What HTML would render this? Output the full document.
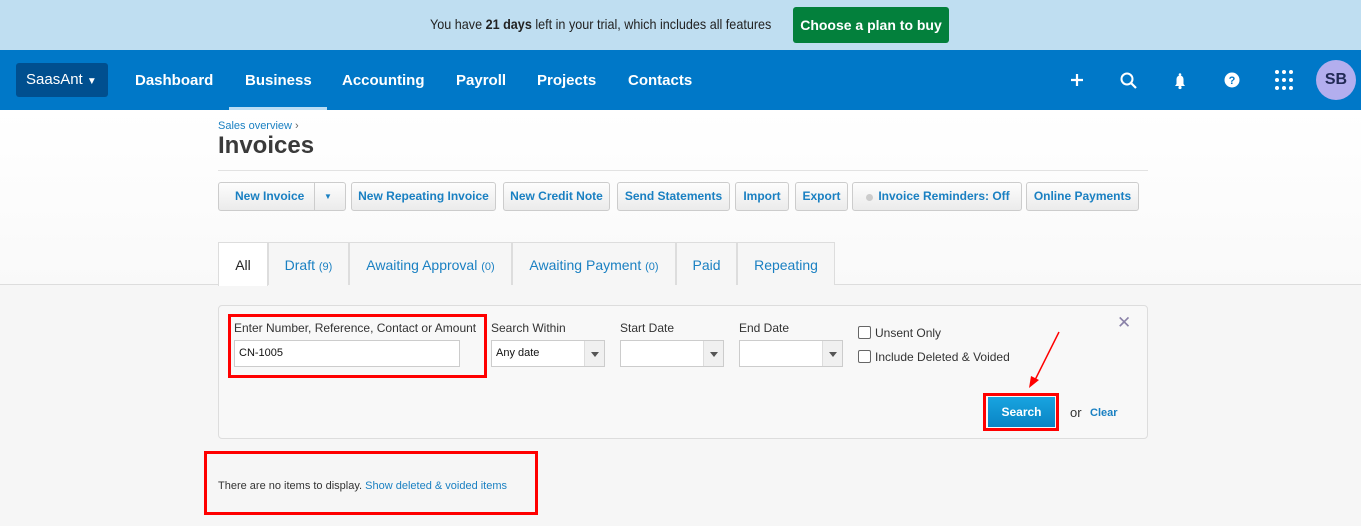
<!DOCTYPE html>
<html><head><meta charset="utf-8"><style>
*{box-sizing:border-box;margin:0;padding:0}
body{width:1361px;height:526px;overflow:hidden;font-family:"Liberation Sans",Arial,sans-serif;background:#f6f6f6;position:relative}
.abs{position:absolute}
.banner{left:0;top:0;width:1361px;height:50px;background:#bfdef1}
.nav{left:0;top:50px;width:1361px;height:60px;background:#0078c8}
.navi{top:72px;color:#fff;font-weight:bold;font-size:15px}
.top{left:0;top:110px;width:1361px;height:175px;background:linear-gradient(#fff,#f9f9f9)}
.btn{top:182px;height:29px;border:1px solid #ccc;border-radius:3px;background:linear-gradient(#fdfdfd,#ebebeb);color:#1a80c2;font-weight:bold;font-size:12px;line-height:27px;text-align:center;white-space:nowrap}
.tab{top:242px;height:43px;border:1px solid #ddd;border-bottom:none;background:#f6f6f6;color:#1a80c2;font-size:14px;line-height:45px;text-align:center;margin-left:-1px}
.tab small{font-size:11px}
.lbl{font-size:12px;color:#333;top:321px}
.inp{top:340px;height:27px;border:1px solid #ccc;background:#fff;font-size:11px;padding-left:4px;line-height:25px;color:#111}
.dd{position:absolute;right:0;top:0;width:20px;height:25px;border-left:1px solid #ddd;background:#f0f0f0}
.dd:after{content:"";position:absolute;left:6px;top:11px;border:4px solid transparent;border-top:5px solid #555}
.red{border:3px solid #f00}
.cb{width:13px;height:13px;border:1px solid #666;border-radius:2px;background:#fff}
</style></head><body>
<div class="abs banner"></div>
<div class="abs" style="left:430px;top:16px;font-size:14px;color:#222;white-space:nowrap;transform:scaleX(0.9);transform-origin:0 0">You have <b>21 days</b> left in your trial, which includes all features</div>
<div class="abs" style="left:793px;top:7px;width:156px;height:36px;background:#03803c;border-radius:3px;color:#fff;font-weight:bold;font-size:14px;line-height:36px;text-align:center">Choose a plan to buy</div>
<div class="abs nav"></div>
<div class="abs" style="left:16px;top:63px;width:92px;height:34px;background:#004f8f;border-radius:3px;color:#fff;font-size:15px;line-height:34px;padding-left:10px">SaasAnt <span style="font-size:10px">▼</span></div>
<div class="abs navi" style="left:135px">Dashboard</div>
<div class="abs navi" style="left:245px">Business</div>
<div class="abs navi" style="left:342px">Accounting</div>
<div class="abs navi" style="left:456px">Payroll</div>
<div class="abs navi" style="left:537px">Projects</div>
<div class="abs navi" style="left:628px">Contacts</div>
<div class="abs" style="left:229px;top:107px;width:98px;height:3px;background:#b9dcf4"></div>
<svg class="abs" style="left:1060px;top:64px" width="290" height="32">
<path d="M11 16h12M17 10v12" stroke="#fff" stroke-width="2.2"/>
<circle cx="67" cy="15" r="5.5" fill="none" stroke="#fff" stroke-width="2"/><path d="M71 19l5 5" stroke="#fff" stroke-width="2.2"/>
<path d="M115 22h10l-1.5-2v-5a3.5 3.5 0 0 0-7 0v5z" fill="#fff"/><circle cx="120" cy="10.5" r="1.3" fill="#fff"/><circle cx="120" cy="23.5" r="1.6" fill="#fff"/>
<circle cx="172" cy="16" r="7.5" fill="#fff"/><text x="172" y="20" font-size="11" font-weight="bold" fill="#0078c8" text-anchor="middle" font-family="Liberation Sans">?</text>
<g fill="#fff"><circle cx="217" cy="8" r="2"/><circle cx="224" cy="8" r="2"/><circle cx="231" cy="8" r="2"/><circle cx="217" cy="16" r="2"/><circle cx="224" cy="16" r="2"/><circle cx="231" cy="16" r="2"/><circle cx="217" cy="24" r="2"/><circle cx="224" cy="24" r="2"/><circle cx="231" cy="24" r="2"/></g>
</svg>
<div class="abs" style="left:1316px;top:60px;width:40px;height:40px;border-radius:50%;background:#b3aeee;color:#222a55;font-weight:bold;font-size:16px;line-height:40px;text-align:center">SB</div>
<div class="abs top"></div>
<div class="abs" style="left:218px;top:120px;font-size:11px;color:#1a80c2">Sales overview <span style="color:#666">›</span></div>
<div class="abs" style="left:218px;top:132px;font-size:24px;font-weight:bold;color:#3a3a3a">Invoices</div>
<div class="abs" style="left:218px;top:170px;width:930px;height:1px;background:#e2e2e2"></div>
<div class="abs btn" style="left:218px;width:128px;text-align:left;padding-left:16px">New Invoice<span style="position:absolute;left:95px;top:0;width:1px;height:27px;background:#ccc"></span><span style="position:absolute;left:105px;top:0;font-size:8px">▼</span></div>
<div class="abs btn" style="left:351px;width:145px">New Repeating Invoice</div>
<div class="abs btn" style="left:503px;width:107px">New Credit Note</div>
<div class="abs btn" style="left:617px;width:113px">Send Statements</div>
<div class="abs btn" style="left:735px;width:54px">Import</div>
<div class="abs btn" style="left:795px;width:53px">Export</div>
<div class="abs btn" style="left:852px;width:170px;padding-left:14px"><span style="position:absolute;left:13px;top:11px;width:7px;height:7px;border-radius:50%;background:#ccc"></span>Invoice Reminders: Off</div>
<div class="abs btn" style="left:1026px;width:113px">Online Payments</div>
<div class="abs" style="left:0;top:284px;width:1361px;height:1px;background:#ddd"></div>
<div class="abs tab" style="left:219px;width:50px;background:#fff;color:#222;height:44px">All</div>
<div class="abs tab" style="left:269px;width:81px">Draft <small>(9)</small></div>
<div class="abs tab" style="left:350px;width:163px">Awaiting Approval <small>(0)</small></div>
<div class="abs tab" style="left:513px;width:164px">Awaiting Payment <small>(0)</small></div>
<div class="abs tab" style="left:677px;width:61px">Paid</div>
<div class="abs tab" style="left:738px;width:98px">Repeating</div>
<div class="abs" style="left:218px;top:305px;width:930px;height:134px;background:#f8f8f8;border:1px solid #ddd;border-radius:4px"></div>
<div class="abs red" style="left:228px;top:314px;width:259px;height:64px"></div>
<div class="abs lbl" style="left:234px">Enter Number, Reference, Contact or Amount</div>
<div class="abs inp" style="left:234px;width:226px">CN-1005</div>
<div class="abs lbl" style="left:491px">Search Within</div>
<div class="abs inp" style="left:491px;width:114px">Any date<span class="dd"></span></div>
<div class="abs lbl" style="left:620px">Start Date</div>
<div class="abs inp" style="left:620px;width:104px"><span class="dd"></span></div>
<div class="abs lbl" style="left:739px">End Date</div>
<div class="abs inp" style="left:739px;width:104px"><span class="dd"></span></div>
<div class="abs cb" style="left:858px;top:326px"></div>
<div class="abs" style="left:875px;top:326px;font-size:12px;color:#333">Unsent Only</div>
<div class="abs cb" style="left:858px;top:350px"></div>
<div class="abs" style="left:875px;top:350px;font-size:12px;color:#333">Include Deleted &amp; Voided</div>
<div class="abs" style="left:1117px;top:313px;font-size:17px;color:#8a82a8">✕</div>
<svg class="abs" style="left:1020px;top:328px" width="45" height="65"><path d="M39 4L14 54" stroke="#f00" stroke-width="1.5"/><path d="M9 60l2-12 8 4z" fill="#f00"/></svg>
<div class="abs red" style="left:983px;top:393px;width:76px;height:38px"></div>
<div class="abs" style="left:988px;top:397px;width:67px;height:30px;background:linear-gradient(#18a4e0,#0a84c4);color:#fff;font-weight:bold;font-size:12px;line-height:30px;text-align:center">Search</div>
<div class="abs" style="left:1070px;top:405px;font-size:13px;color:#333">or</div>
<div class="abs" style="left:1090px;top:407px;font-size:11px;color:#1a80c2;font-weight:bold">Clear</div>
<div class="abs red" style="left:204px;top:451px;width:334px;height:64px"></div>
<div class="abs" style="left:218px;top:480px;font-size:11px;color:#333">There are no items to display. <span style="color:#1a80c2">Show deleted &amp; voided items</span></div>
</body></html>
